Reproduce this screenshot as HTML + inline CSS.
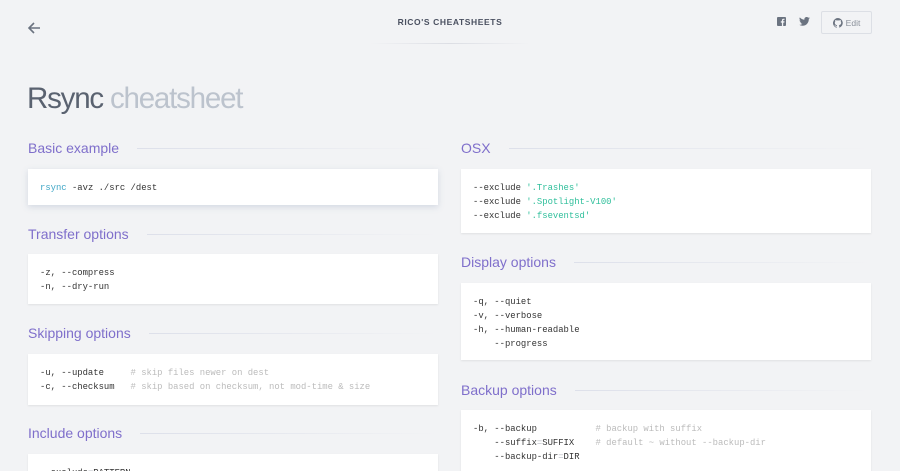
<!DOCTYPE html>
<html><head><meta charset="utf-8"><style>
*{margin:0;padding:0;box-sizing:border-box}
html,body{width:900px;height:471px;overflow:hidden}
body{background:#f2f3f5;font-family:"Liberation Sans",sans-serif;position:relative}
.a{position:absolute}
.h{position:absolute;font-size:14px;color:#7f6fcb;height:20px;line-height:20px;display:flex;align-items:center;width:410px}
.h span{white-space:nowrap}
.h i{flex:1;height:1px;background:linear-gradient(90deg,#dde0ea,rgba(221,224,234,0));margin-left:18px}
.c{position:absolute;width:410px;background:#fff;padding:12px 12px 10px;font-family:"Liberation Mono",monospace;font-size:8.9px;line-height:14px;color:#333;white-space:pre;box-shadow:0 1px 2px rgba(0,0,0,.08)}
.s{color:#2fbf9b}.k{color:#3fa6c6}.m{color:#b8bcc4}.e{color:#bbb}
</style></head><body>
<svg class="a" style="left:27px;top:21px" width="14" height="14" viewBox="0 0 14 14"><path d="M13 7H2M7 2L2 7l5 5" fill="none" stroke="#6b7380" stroke-width="1.6"/></svg>
<div class="a" style="left:370px;top:17px;width:160px;text-align:center;font-size:8.5px;font-weight:bold;letter-spacing:.6px;color:#4a5060">RICO'S CHEATSHEETS</div>
<div class="a" style="left:370px;top:43px;width:160px;height:1px;background:linear-gradient(90deg,rgba(220,222,228,0),#dcdee4,rgba(220,222,228,0))"></div>
<svg class="a" style="left:777px;top:17px" width="9" height="9" viewBox="0 0 9 9"><rect width="9" height="9" rx="1" fill="#6b7380"/><path d="M6.2 9V5.6h1.1l.2-1.3H6.2v-.8c0-.4.1-.6.6-.6h.7V1.8H6.6c-1.1 0-1.7.6-1.7 1.6v.9H3.8v1.3h1.1V9z" fill="#f2f3f5"/></svg>
<svg class="a" style="left:799px;top:17px" width="11" height="9" viewBox="0 0 24 20"><path d="M24 2.4a10 10 0 0 1-2.8.8A5 5 0 0 0 23.3.4a10 10 0 0 1-3.1 1.2A4.9 4.9 0 0 0 11.8 6 14 14 0 0 1 1.7.9a4.9 4.9 0 0 0 1.5 6.6A4.9 4.9 0 0 1 1 6.9a4.9 4.9 0 0 0 3.9 4.8 5 5 0 0 1-2.2.1 4.9 4.9 0 0 0 4.6 3.4A9.9 9.9 0 0 1 0 17.3 14 14 0 0 0 7.5 19.5c9.1 0 14-7.5 14-14v-.6A10 10 0 0 0 24 2.4z" fill="#6b7380"/></svg>
<div class="a" style="left:821px;top:11px;width:51px;height:23px;border:1px solid #dcdfe5;border-radius:2px;font-size:8.5px;color:#8a909a;display:flex;align-items:center;justify-content:center;gap:3px"><svg width="10" height="10" viewBox="0 0 16 16"><path d="M8 0a8 8 0 0 0-2.5 15.6c.4 0 .5-.2.5-.4v-1.5c-2.2.5-2.7-1-2.7-1-.4-.9-.9-1.2-.9-1.2-.7-.5.1-.5.1-.5.8.1 1.2.8 1.2.8.7 1.3 1.9.9 2.3.7.1-.5.3-.9.5-1.1-1.8-.2-3.6-.9-3.6-4 0-.9.3-1.6.8-2.1-.1-.2-.4-1 .1-2.1 0 0 .7-.2 2.2.8a7.5 7.5 0 0 1 4 0c1.5-1 2.2-.8 2.2-.8.4 1.1.2 1.9.1 2.1.5.6.8 1.3.8 2.1 0 3.1-1.9 3.7-3.6 3.9.3.3.5.8.5 1.5v2.2c0 .2.1.5.6.4A8 8 0 0 0 8 0z" fill="#6b7380"/></svg>Edit</div>
<div class="a" style="left:27px;top:79px;font-size:29.5px;letter-spacing:-1.2px;color:#5a6270;line-height:40px">Rsync <span style="color:#bcc3cd">cheatsheet</span></div>

<div class="h" style="left:28px;top:138px"><span>Basic example</span><i></i></div>
<div class="c" style="left:28px;top:169px;height:36px;box-shadow:0 2px 6px rgba(120,140,170,.25)"><span class="k">rsync</span> -avz ./src /dest</div>
<div class="h" style="left:28px;top:224px"><span>Transfer options</span><i></i></div>
<div class="c" style="left:28px;top:254px;height:50px">-z, --compress
-n, --dry-run</div>
<div class="h" style="left:28px;top:323px"><span>Skipping options</span><i></i></div>
<div class="c" style="left:28px;top:354px;height:51px">-u, --update     <span class="e"># skip files newer on dest</span>
-c, --checksum   <span class="e"># skip based on checksum, not mod-time &amp; size</span></div>
<div class="h" style="left:28px;top:423px"><span>Include options</span><i></i></div>
<div class="c" style="left:28px;top:454px">--exclude<span class="m">=</span>PATTERN</div>

<div class="h" style="left:461px;top:138px"><span>OSX</span><i></i></div>
<div class="c" style="left:461px;top:169px;height:64px">--exclude <span class="s">'.Trashes'</span>
--exclude <span class="s">'.Spotlight-V100'</span>
--exclude <span class="s">'.fseventsd'</span></div>
<div class="h" style="left:461px;top:252px"><span>Display options</span><i></i></div>
<div class="c" style="left:461px;top:283px;height:77px">-q, --quiet
-v, --verbose
-h, --human-readable
    --progress</div>
<div class="h" style="left:461px;top:380px"><span>Backup options</span><i></i></div>
<div class="c" style="left:461px;top:410px;height:80px">-b, --backup           <span class="e"># backup with suffix</span>
    --suffix<span class="m">=</span>SUFFIX    <span class="e"># default ~ without --backup-dir</span>
    --backup-dir<span class="m">=</span>DIR</div>
</body></html>
